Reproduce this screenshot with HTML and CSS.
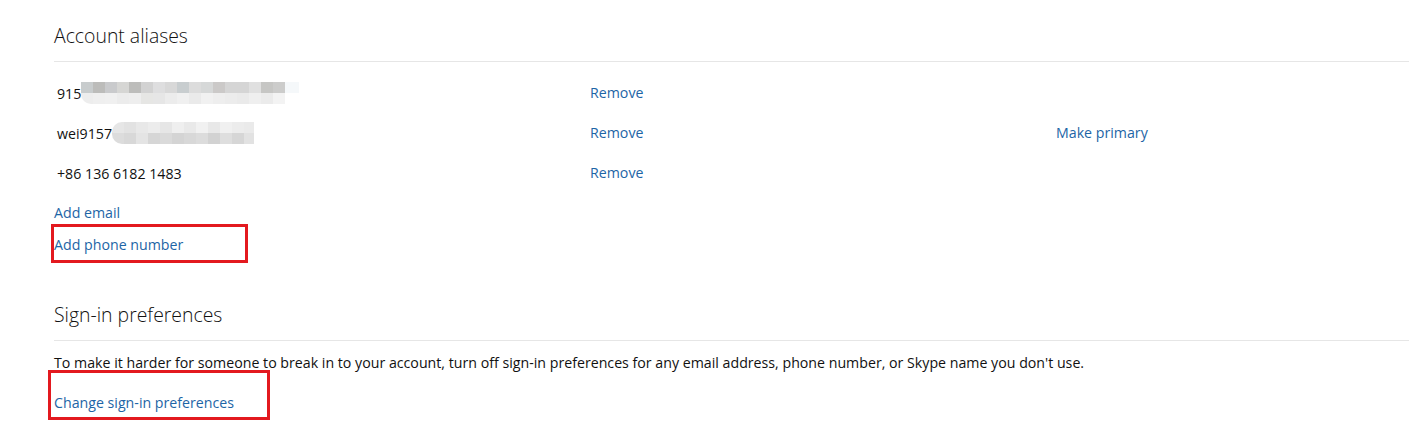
FILE: index.html
```html
<!DOCTYPE html>
<html lang="en">

<head>
    <meta charset="UTF-8">
    <meta name="viewport" content="width=device-width, initial-scale=1.0">
    <title>Your info - Account aliases</title>
    <link rel="stylesheet" href="styles.css">
</head>

<body>
    <section class="section aliases">
        <div class="section-head">
            <h2>Account aliases</h2>
        </div>
        <div class="alias-list">
            <div class="alias-row">
                <span class="alias-name">915<span class="blur blur-one"></span></span>
                <a href="#" class="link">Remove</a>
                <span></span>
            </div>
            <div class="alias-row">
                <span class="alias-name">wei9157<span class="blur blur-two"></span></span>
                <a href="#" class="link">Remove</a>
                <a href="#" class="link">Make primary</a>
            </div>
            <div class="alias-row">
                <span class="alias-name">+86 136 6182 1483</span>
                <a href="#" class="link">Remove</a>
                <span></span>
            </div>
        </div>
        <div class="add-links">
            <a href="#" class="link">Add email</a>
            <a href="#" class="link marked mark-phone">Add phone number</a>
        </div>
    </section>

    <section class="section signin">
        <div class="section-head">
            <h2>Sign-in preferences</h2>
        </div>
        <p class="note">To make it harder for someone to break in to your account, turn off sign-in preferences for any email address, phone number, or Skype name you don't use.</p>
        <a href="#" class="link marked mark-signin">Change sign-in preferences</a>
    </section>
</body>

</html>
```

FILE: styles.css
```css
body {
    margin: 0;
    min-height: 100vh;
    background: #fff;
    color: #111;
    font-family: "Open Sans", "Noto Sans", sans-serif;
    font-size: 14.2px;
}

.section {
    padding-left: 54px;
}

.aliases {
    padding-top: 22px;
}

.signin {
    margin-top: 46px;
    padding-bottom: 36px;
}

.section-head {
    border-bottom: 1px solid #e6e6e6;
    padding-bottom: 11px;
}

.section-head h2 {
    margin: 0;
    font-size: 19.4px;
    font-weight: 300;
    line-height: 28px;
    color: #111;
}

.alias-list {
    margin-top: 11px;
}

.alias-row {
    display: grid;
    grid-template-columns: 536px 466px 1fr;
    height: 40px;
    align-items: center;
}

.alias-name {
    display: flex;
    align-items: center;
    padding-left: 3px;
}

.link {
    color: #1d65a6;
    text-decoration: none;
    line-height: 20px;
}

.add-links {
    display: flex;
    flex-direction: column;
    align-items: flex-start;
    gap: 12px;
    margin-top: 10px;
}

/* pixelated privacy blur over the rest of the address */
.blur {
    display: inline-block;
    height: 22px;
    background-repeat: no-repeat;
    background-size: 100% 50%;
}

.blur-one {
    width: 218px;
    border-radius: 0 0 0 10px;
    background-position: top, bottom;
    background-image:
        linear-gradient(to right, #c8cccd 0 12px, #bcbcba 12px 24px, #c9cacc 24px 36px, #d6d6d4 36px 48px, #bdbdbb 48px 60px, #d2d2d2 60px 72px, #dededf 72px 84px, #d8d8d8 84px 96px, #c8cdcf 96px 108px, #dcdcdc 108px 120px, #d6d8d8 120px 132px, #cbc9c8 132px 144px, #d5d5d5 144px 156px, #d5d5d5 156px 168px, #e0e0e0 168px 180px, #c6c6c4 180px 192px, #cccccb 192px 204px, #f5f8fa 204px 218px),
        linear-gradient(to right, #ededed 0 12px, #efefef 12px 24px, #f0f0f0 24px 36px, #ececec 36px 48px, #eeeeee 48px 60px, #e6e6e4 60px 72px, #e6e6e6 72px 84px, #ececec 84px 96px, #f0f0f0 96px 108px, #eaeaea 108px 120px, #f1f1f1 120px 132px, #eeeeee 132px 144px, #ececec 144px 156px, #eaeaea 156px 168px, #efefef 168px 180px, #ebebeb 180px 192px, #f3f3f3 192px 204px, #ffffff 204px 218px);
}

.blur-two {
    width: 142px;
    border-radius: 10px 0 0 10px;
    background-position: top, bottom;
    background-image:
        linear-gradient(to right, #e6e6e6 0 12px, #e2e2e2 12px 24px, #e8e8e8 24px 36px, #ececec 36px 48px, #e6e6e6 48px 60px, #efefef 60px 72px, #e9e9e9 72px 84px, #f1f1f1 84px 96px, #e8e8e8 96px 108px, #f0f0f0 108px 120px, #ececec 120px 132px, #eaeaea 132px 142px),
        linear-gradient(to right, #dcdcdc 0 12px, #d8d8d8 12px 24px, #e4e4e4 24px 36px, #d6d6d6 36px 48px, #dadada 48px 60px, #d4d4d4 60px 72px, #d8d8d8 72px 84px, #dcdcdc 84px 96px, #d2d2d2 96px 108px, #dedede 108px 120px, #d6d6d6 120px 132px, #e2e2e2 132px 142px);
}

.note {
    margin: 12px 0 0;
    line-height: 20px;
}

.signin .link {
    display: inline-block;
    margin-top: 20px;
}

/* red annotation boxes drawn over the links */
.marked {
    position: relative;
}

.marked::after {
    content: "";
    position: absolute;
    border: 3px solid #e3191f;
}

.mark-phone::after {
    left: -3px;
    top: -11px;
    width: 191px;
    height: 33px;
}

.mark-signin::after {
    left: -6px;
    top: -23px;
    width: 216px;
    height: 44px;
}
```
